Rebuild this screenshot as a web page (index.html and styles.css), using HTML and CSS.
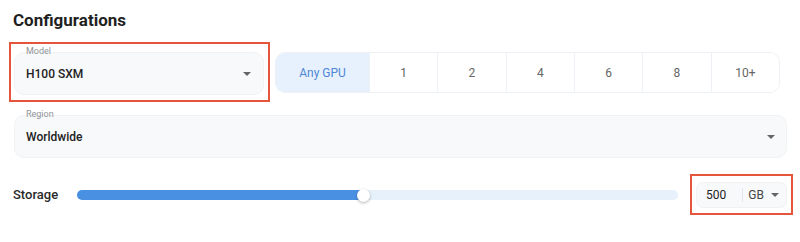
FILE: index.html
```html
<!DOCTYPE html>
<html lang="en">

<head>
    <meta charset="UTF-8">
    <meta name="viewport" content="width=device-width, initial-scale=1.0">
    <title>Configurations</title>
    <link rel="stylesheet" href="styles.css">
</head>

<body>
    <div class="config">
        <h2 class="config-title">Configurations</h2>

        <div class="row-model">
            <div class="highlight highlight-model">
                <div class="select-box select-model">
                    <span class="select-label">Model</span>
                    <span class="select-value">H100 SXM</span>
                    <span class="caret"></span>
                </div>
            </div>
            <div class="gpu-group">
                <button class="gpu-btn gpu-any active">Any GPU</button>
                <button class="gpu-btn">1</button>
                <button class="gpu-btn">2</button>
                <button class="gpu-btn">4</button>
                <button class="gpu-btn">6</button>
                <button class="gpu-btn">8</button>
                <button class="gpu-btn">10+</button>
            </div>
        </div>

        <div class="select-box select-region">
            <span class="select-label">Region</span>
            <span class="select-value">Worldwide</span>
            <span class="caret"></span>
        </div>

        <div class="row-storage">
            <span class="storage-label">Storage</span>
            <div class="slider">
                <div class="slider-fill" style="width: 47.6%"></div>
                <div class="slider-thumb" style="left: 47.6%"></div>
            </div>
            <div class="highlight highlight-storage">
                <div class="storage-input">
                    <span class="storage-value">500</span>
                    <span class="storage-divider"></span>
                    <span class="storage-unit">GB</span>
                    <span class="caret"></span>
                </div>
            </div>
        </div>
    </div>
</body>

</html>
```

FILE: styles.css
```css
body {
    margin: 0;
    padding: 0;
    background-color: #fff;
    font-family: Roboto, "Liberation Sans", Arial, sans-serif;
    color: #222;
}

.config {
    padding: 10px 0 0 0;
}

.config-title {
    margin: 0 0 12px 13px;
    font-size: 17px;
    line-height: 20px;
    font-weight: 700;
    color: #1f1f1f;
}

.row-model {
    display: flex;
    align-items: center;
    gap: 5px;
    margin-left: 9px;
}

.highlight {
    border: 2px solid #e4553c;
    box-sizing: border-box;
}

.highlight-model {
    width: 261px;
    height: 60px;
    padding: 8px 4px 5px 3px;
}

.select-box {
    position: relative;
    display: flex;
    align-items: center;
    box-sizing: border-box;
    height: 43px;
    padding: 0 12px 0 11px;
    background-color: #f8f9fa;
    border: 1px solid #f0f2f4;
    border-radius: 10px;
}

.select-model {
    width: 250px;
}

.select-region {
    width: 773px;
    margin: 13px 0 0 14px;
    padding-right: 11px;
}

.select-label {
    position: absolute;
    left: 10px;
    top: -7px;
    padding: 0 1px;
    font-size: 9px;
    line-height: 10px;
    color: #8f9397;
}

.select-value {
    flex: 1;
    font-size: 12px;
    font-weight: 500;
    color: #222;
}

.caret {
    width: 0;
    height: 0;
    border-left: 4px solid transparent;
    border-right: 4px solid transparent;
    border-top: 4px solid #666;
}

.gpu-group {
    display: flex;
    width: 505px;
    height: 41px;
    box-sizing: border-box;
    border: 1px solid #edf1f6;
    border-radius: 10px;
    overflow: hidden;
    margin-top: 1px;
}

.gpu-btn {
    flex: 1;
    border: none;
    border-left: 1px solid #eef2f7;
    background-color: #fff;
    font-family: Roboto, "Liberation Sans", Arial, sans-serif;
    font-size: 12px;
    color: #666;
    padding: 0;
    cursor: pointer;
}

.gpu-btn.gpu-any {
    flex: 0 0 93px;
    border-left: none;
}

.gpu-btn.active {
    background-color: #e6f1fd;
    color: #4f87d4;
}

.row-storage {
    display: flex;
    align-items: center;
    margin: 16px 0 0 13px;
}

.storage-label {
    width: 64px;
    font-size: 13px;
    font-weight: 500;
    color: #2a2a2a;
}

.slider {
    position: relative;
    width: 601px;
    height: 10px;
    border-radius: 5px;
    background-color: #e6f1fb;
    margin-right: 12px;
}

.slider-fill {
    height: 100%;
    border-radius: 5px;
    background-color: #4a90e2;
}

.slider-thumb {
    position: absolute;
    top: 50%;
    width: 13px;
    height: 13px;
    margin: -6px 0 0 -6px;
    border-radius: 50%;
    background-color: #fff;
    box-shadow: 0 1px 3px rgba(0, 0, 0, 0.3);
}

.highlight-storage {
    width: 103px;
    height: 41px;
    padding: 6px 4px 5px 4px;
}

.storage-input {
    display: flex;
    align-items: center;
    box-sizing: border-box;
    height: 26px;
    padding: 0 7px 0 9px;
    background-color: #f8f9fa;
    border: 1px solid #f0f2f4;
    border-radius: 7px;
}

.storage-value {
    width: 40px;
    font-size: 12px;
    color: #222;
}

.storage-divider {
    width: 1px;
    height: 14px;
    background-color: #e3e6ea;
    margin-right: 5px;
}

.storage-unit {
    font-size: 12px;
    color: #444;
    margin-right: 7px;
}
```
